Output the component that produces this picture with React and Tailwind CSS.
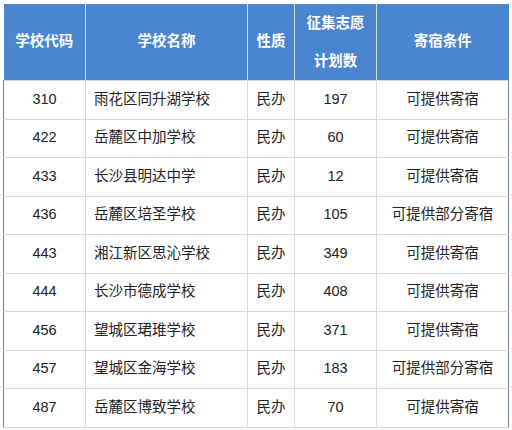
import React from "react";

const rows = [
  ["310", "雨花区同升湖学校", "民办", "197", "可提供寄宿"],
  ["422", "岳麓区中加学校", "民办", "60", "可提供寄宿"],
  ["433", "长沙县明达中学", "民办", "12", "可提供寄宿"],
  ["436", "岳麓区培圣学校", "民办", "105", "可提供部分寄宿"],
  ["443", "湘江新区思沁学校", "民办", "349", "可提供寄宿"],
  ["444", "长沙市德成学校", "民办", "408", "可提供寄宿"],
  ["456", "望城区珺琟学校", "民办", "371", "可提供寄宿"],
  ["457", "望城区金海学校", "民办", "183", "可提供部分寄宿"],
  ["487", "岳麓区博致学校", "民办", "70", "可提供寄宿"],
];

const font = { fontFamily: '"Liberation Sans", "Noto Sans CJK SC", sans-serif' };

export default function App() {
  return (
    <div className="w-[512px] h-[430px] bg-white pt-[4px] pl-[3px]" style={font}>
      <table className="w-[505px] table-fixed border-collapse text-[14.5px]">
        <colgroup>
          <col className="w-[82px]" />
          <col className="w-[162px]" />
          <col className="w-[47px]" />
          <col className="w-[82px]" />
          <col className="w-[132px]" />
        </colgroup>
        <thead>
          <tr className="h-[76px] bg-[#4a86cf] text-white font-bold">
            <th className="border-r border-[#d6dde8] text-center font-bold">学校代码</th>
            <th className="border-r border-[#d6dde8] text-center font-bold">学校名称</th>
            <th className="border-r border-[#d6dde8] text-center font-bold">性质</th>
            <th className="border-r border-[#d6dde8] text-center font-bold leading-[38px]">
              征集志愿
              <br />
              计划数
            </th>
            <th className="text-center font-bold">寄宿条件</th>
          </tr>
        </thead>
        <tbody className="text-[#222]">
          {rows.map((r, i) => (
            <tr key={i} className="h-[38.5px]">
              <td className="border border-[#d9d9d9] border-l-[#6d7f96] text-center">{r[0]}</td>
              <td className="border border-[#d9d9d9] text-left pl-[8px]">{r[1]}</td>
              <td className="border border-[#d9d9d9] text-center">{r[2]}</td>
              <td className="border border-[#d9d9d9] text-center">{r[3]}</td>
              <td className="border border-[#d9d9d9] border-r-[#6d7f96] text-center">{r[4]}</td>
            </tr>
          ))}
          <tr className="h-0">
            <td colSpan={5} className="border-t border-[#6d7f96] p-0"></td>
          </tr>
        </tbody>
      </table>
    </div>
  );
}
